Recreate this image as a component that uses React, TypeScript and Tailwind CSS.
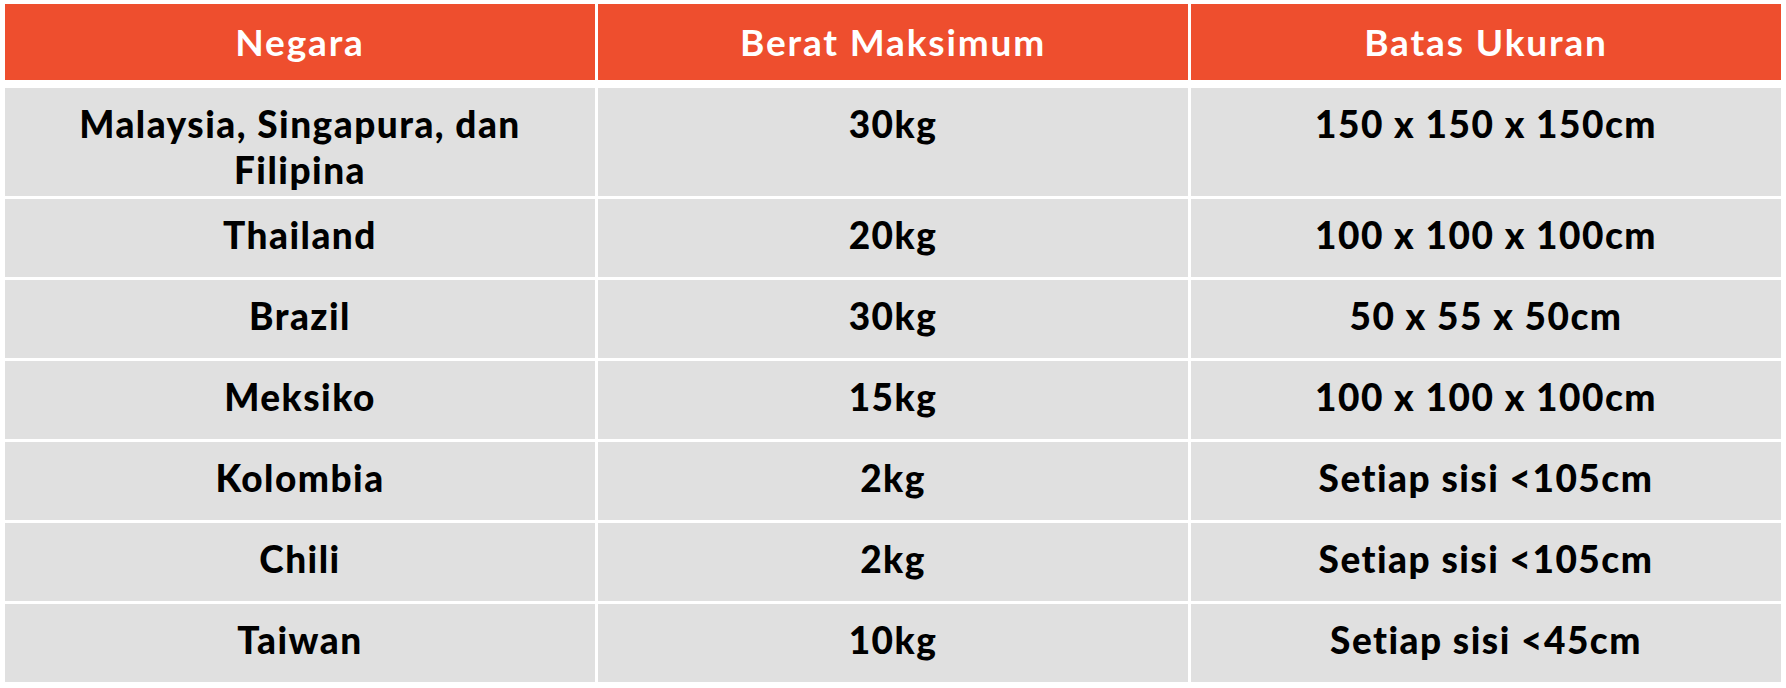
type Row = {
  country: string;
  weight: string;
  size: string;
  tall?: boolean;
};

const rows: Row[] = [
  { country: 'Malaysia, Singapura, dan Filipina', weight: '30kg', size: '150 x 150 x 150cm', tall: true },
  { country: 'Thailand', weight: '20kg', size: '100 x 100 x 100cm' },
  { country: 'Brazil', weight: '30kg', size: '50 x 55 x 50cm' },
  { country: 'Meksiko', weight: '15kg', size: '100 x 100 x 100cm' },
  { country: 'Kolombia', weight: '2kg', size: 'Setiap sisi <105cm' },
  { country: 'Chili', weight: '2kg', size: 'Setiap sisi <105cm' },
  { country: 'Taiwan', weight: '10kg', size: 'Setiap sisi <45cm' },
];

const headers = ['Negara', 'Berat Maksimum', 'Batas Ukuran'];

export default function App() {
  return (
    <div className="min-h-screen bg-white px-[5px] pt-[4px] pb-[6px] font-['Lato','Liberation_Sans',sans-serif]">
      <div className="grid grid-cols-3 gap-x-[3px]">
        {headers.map((h) => (
          <div
            key={h}
            className="h-[76px] bg-[#ee4e2e] flex items-center justify-center text-white text-[37px] tracking-[0.05em] font-bold"
          >
            {h}
          </div>
        ))}
      </div>

      <div className="mt-[8px] flex flex-col gap-y-[3px]">
        {rows.map((r) => (
          <div key={r.country} className="grid grid-cols-3 gap-x-[3px]">
            {[r.country, r.weight, r.size].map((v, i) => (
              <div
                key={i}
                className={`${r.tall ? 'h-[108px]' : 'h-[78px]'} bg-[#e0e0e0] px-6 pt-[13px] text-center text-black text-[37px] tracking-[0.04em] leading-[46px] font-black`}
              >
                {i === 0 && r.tall ? (
                  <>
                    Malaysia, Singapura, dan
                    <br />
                    Filipina
                  </>
                ) : (
                  v
                )}
              </div>
            ))}
          </div>
        ))}
      </div>
    </div>
  );
}
